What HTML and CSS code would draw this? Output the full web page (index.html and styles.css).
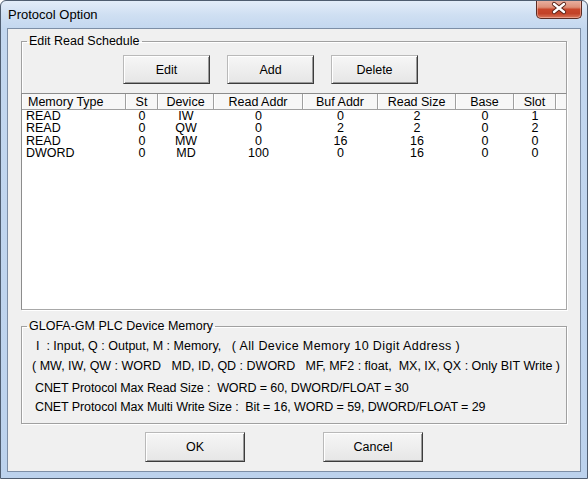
FILE: index.html
```html
<!DOCTYPE html>
<html>
<head>
<meta charset="utf-8">
<title>Protocol Option</title>
<link rel="stylesheet" href="styles.css">
</head>
<body>
<div class="window">
  <div class="titlebar">
    <span class="title">Protocol Option</span>
    <div class="close">
      <svg width="46" height="19" viewBox="0 0 46 19">
        <path d="M18 5 L28 13 M28 5 L18 13" stroke="#5a2318" stroke-width="4.2" stroke-linecap="round" fill="none"/>
        <path d="M18 5 L28 13 M28 5 L18 13" stroke="#ffffff" stroke-width="2.4" stroke-linecap="round" fill="none"/>
      </svg>
    </div>
  </div>
  <div class="client">
    <fieldset class="group group-schedule">
      <legend>Edit Read Schedule</legend>
      <div class="btn-row">
        <button class="btn">Edit</button>
        <button class="btn">Add</button>
        <button class="btn">Delete</button>
      </div>
      <div class="list">
        <div class="list-head">
          <div class="hcell hcell-first">Memory Type</div>
          <div class="hcell">St</div>
          <div class="hcell">Device</div>
          <div class="hcell">Read Addr</div>
          <div class="hcell">Buf Addr</div>
          <div class="hcell">Read Size</div>
          <div class="hcell">Base</div>
          <div class="hcell">Slot</div>
          <div class="hcell hcell-rest"></div>
        </div>
        <div class="list-row">
          <div class="cell cell-first">READ</div><div class="cell">0</div><div class="cell">IW</div><div class="cell">0</div><div class="cell">0</div><div class="cell">2</div><div class="cell">0</div><div class="cell">1</div><div class="cell"></div>
        </div>
        <div class="list-row">
          <div class="cell cell-first">READ</div><div class="cell">0</div><div class="cell">QW</div><div class="cell">0</div><div class="cell">2</div><div class="cell">2</div><div class="cell">0</div><div class="cell">2</div><div class="cell"></div>
        </div>
        <div class="list-row">
          <div class="cell cell-first">READ</div><div class="cell">0</div><div class="cell">MW</div><div class="cell">0</div><div class="cell">16</div><div class="cell">16</div><div class="cell">0</div><div class="cell">0</div><div class="cell"></div>
        </div>
        <div class="list-row">
          <div class="cell cell-first">DWORD</div><div class="cell">0</div><div class="cell">MD</div><div class="cell">100</div><div class="cell">0</div><div class="cell">16</div><div class="cell">0</div><div class="cell">0</div><div class="cell"></div>
        </div>
      </div>
    </fieldset>

    <fieldset class="group group-memory">
      <legend>GLOFA-GM PLC Device Memory</legend>
      <p class="note note-1">I  : Input, Q : Output, M : Memory,   <span class="note-wide">( All Device Memory 10 Digit Address )</span></p>
      <p class="note note-2">( MW, IW, QW : WORD   MD, ID, QD : DWORD   MF, MF2 : float,  MX, IX, QX : Only BIT Write )</p>
      <p class="note note-3">CNET Protocol Max Read Size :  WORD = 60, DWORD/FLOAT = 30</p>
      <p class="note note-4">CNET Protocol Max Multi Write Size :  Bit = 16, WORD = 59, DWORD/FLOAT = 29</p>
    </fieldset>

    <div class="dlg-buttons">
      <button class="btn btn-dlg">OK</button>
      <button class="btn btn-dlg">Cancel</button>
    </div>
  </div>
</div>
</body>
</html>
```

FILE: styles.css
```css
* { box-sizing: border-box; }

html, body {
  margin: 0;
  padding: 0;
  background: #ffffff;
}

body {
  font-family: "Liberation Sans", Arial, sans-serif;
  font-size: 12.5px;
  color: #000;
}

.window {
  width: 588px;
  height: 479px;
  border: 1px solid #4f5d70;
  border-radius: 6px 6px 0 0;
  background: linear-gradient(to bottom, #e3edf9 0px, #cfdff2 14px, #c3d7ef 28px, #bcd2ed 100%);
  padding: 0 6px 6px 6px;
  display: flex;
  flex-direction: column;
  overflow: hidden;
}

.titlebar {
  height: 27px;
  flex: none;
  display: flex;
  justify-content: space-between;
  align-items: flex-start;
  margin: 0 -1px 0 0;
}

.title {
  font-size: 13px;
  line-height: 15px;
  padding: 6px 0 0 1px;
  color: #000;
}

.close {
  width: 46px;
  height: 19px;
  margin-top: -1px;
  border: 1px solid #5b2c24;
  border-top: none;
  border-radius: 0 0 5px 5px;
  background: linear-gradient(to bottom, #eab3a4 0%, #dd8f78 40%, #c8462b 52%, #c24228 75%, #d9785c 100%);
  box-shadow: inset 0 0 0 1px rgba(255, 210, 200, 0.45);
}

.close svg {
  display: block;
  margin: -1px 0 0 -1px;
}

.client {
  flex: 1;
  background: #f0f0f0;
  border: 1px solid #7d8ea6;
  display: flex;
  flex-direction: column;
}

/* group boxes */
.group {
  margin: 0 13px;
  padding: 0;
  min-width: 0;
  border: 1px solid #a0a0a0;
  box-shadow: inset 1px 1px 0 #ffffff, 1px 1px 0 #ffffff;
}

.group legend {
  font-size: 12.5px;
  line-height: 15px;
  height: 15px;
  padding: 0 2px;
  margin-left: 5px;
}

.group-schedule {
  margin-top: 5px;
}

.group-memory {
  margin-top: 9px;
  padding: 5px 0 8px 0;
}

.btn-row {
  display: flex;
  gap: 17px;
  padding: 6px 0 0 101px;
}

.btn {
  width: 87px;
  height: 29px;
  padding: 0;
  margin: 0;
  font-family: "Liberation Sans", Arial, sans-serif;
  font-size: 12.5px;
  color: #000;
  background: linear-gradient(to bottom, #f6f6f6 0%, #eeeeee 50%, #e6e6e6 100%);
  border: 1px solid;
  border-color: #b9b9b9 #3c3c3c #3c3c3c #b9b9b9;
  box-shadow: inset 1px 1px 0 #ffffff, inset -1px -1px 0 #9a9a9a;
  border-radius: 0;
}

/* list view */
.list {
  margin: 9px -1px -1px -1px;
  height: 217px;
  background: #ffffff;
  border: 1px solid #8c8c8c;
  border-right-color: #a8a8a8;
  border-bottom-color: #a8a8a8;
}

.list-head,
.list-row {
  display: grid;
  grid-template-columns: 104px 32px 56px 89px 75px 78px 58px 42px 1fr;
}

.list-head {
  height: 16px;
  background: #f7f7f7;
  border-bottom: 1px solid #a0a0a0;
}

.hcell {
  font-size: 12.5px;
  line-height: 16px;
  text-align: center;
  border-right: 1px solid #a0a0a0;
  box-shadow: inset 1px 0 0 #ffffff;
  white-space: nowrap;
  overflow: hidden;
}

.hcell-first {
  text-align: left;
  padding-left: 6px;
}

.hcell-rest {
  border-right: none;
}

.list-row {
  height: 12.3px;
}

.cell {
  font-size: 12.5px;
  line-height: 12.3px;
  text-align: center;
  white-space: nowrap;
}

.cell-first {
  text-align: left;
  padding-left: 4px;
}

/* notes */
.note {
  margin: 0;
  height: 15px;
  font-size: 12.5px;
  line-height: 15px;
  white-space: pre;
}

.note-wide {
  letter-spacing: 0.4px;
}

.note-1 { padding-left: 14px; }
.note-2 { padding-left: 10px; margin-top: 5px; }
.note-3 { padding-left: 13px; margin-top: 7px; letter-spacing: -0.1px; }
.note-4 { padding-left: 13px; margin-top: 4px; letter-spacing: -0.1px; }

/* dialog buttons */
.dlg-buttons {
  display: flex;
  gap: 78px;
  padding-left: 137px;
  margin-top: 8px;
}

.btn-dlg {
  width: 100px;
  height: 30px;
}
```
